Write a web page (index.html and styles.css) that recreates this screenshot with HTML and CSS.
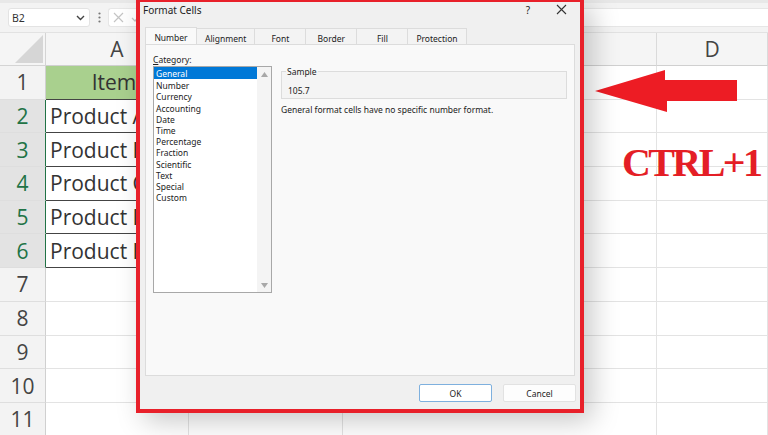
FILE: index.html
```html
<!DOCTYPE html>
<html>
<head>
<meta charset="utf-8">
<link rel="stylesheet" href="styles.css">
</head>
<body>
<div class="app">
  <div class="formula-bar">
    <div class="name-box">
      <span>B2</span>
      <svg class="chev" width="9" height="6" viewBox="0 0 9 6"><path d="M1 1 L4.5 4.5 L8 1" fill="none" stroke="#444" stroke-width="1.4"/></svg>
    </div>
    <div class="more">
      <svg width="3" height="11" viewBox="0 0 3 11"><circle cx="1.5" cy="1.5" r="1.1" fill="#777"/><circle cx="1.5" cy="5.5" r="1.1" fill="#777"/><circle cx="1.5" cy="9.5" r="1.1" fill="#777"/></svg>
    </div>
    <div class="formula-input">
      <div class="fx-btns">
        <svg width="11" height="11" viewBox="0 0 11 11"><path d="M1 1 L10 10 M10 1 L1 10" stroke="#c4c4c4" stroke-width="1.2"/></svg>
        <svg width="11" height="11" viewBox="0 0 11 11"><path d="M1 6 L4 9 L10 2" fill="none" stroke="#c4c4c4" stroke-width="1.2"/></svg>
      </div>
    </div>
  </div>

  <div class="sheet">
    <div class="corner"><svg width="28" height="28" viewBox="0 0 28 28"><path d="M28 0 L28 28 L0 28 Z" fill="#d6d6d6"/></svg></div>
    <div class="ch">A</div><div class="ch">B</div><div class="ch">C</div><div class="ch">D</div>

    <div class="rh">1</div><div class="cell title-cell">Items</div><div class="cell"></div><div class="cell"></div><div class="cell"></div>
    <div class="rh sel">2</div><div class="cell prod">Product A</div><div class="cell"></div><div class="cell"></div><div class="cell"></div>
    <div class="rh sel">3</div><div class="cell prod">Product B</div><div class="cell"></div><div class="cell"></div><div class="cell"></div>
    <div class="rh sel">4</div><div class="cell prod">Product C</div><div class="cell"></div><div class="cell"></div><div class="cell"></div>
    <div class="rh sel">5</div><div class="cell prod">Product D</div><div class="cell"></div><div class="cell"></div><div class="cell"></div>
    <div class="rh sel">6</div><div class="cell prod">Product E</div><div class="cell"></div><div class="cell"></div><div class="cell"></div>
    <div class="rh">7</div><div class="cell"></div><div class="cell"></div><div class="cell"></div><div class="cell"></div>
    <div class="rh">8</div><div class="cell"></div><div class="cell"></div><div class="cell"></div><div class="cell"></div>
    <div class="rh">9</div><div class="cell"></div><div class="cell"></div><div class="cell"></div><div class="cell"></div>
    <div class="rh">10</div><div class="cell"></div><div class="cell"></div><div class="cell"></div><div class="cell"></div>
    <div class="rh">11</div><div class="cell"></div><div class="cell"></div><div class="cell"></div><div class="cell"></div>
  </div>

  <svg class="arrow" width="150" height="50" viewBox="590 66 150 50">
    <polygon points="595,91 665,70 665,80 737,80 737,101 667,101 667,112" fill="#ed1c24"/>
  </svg>
  <div class="shortcut">CTRL+1</div>

  <div class="dialog">
    <div class="titlebar">
      <span class="title">Format Cells</span>
      <span class="help">?</span>
      <svg class="close" width="11" height="11" viewBox="0 0 11 11"><path d="M1 1 L10 10 M10 1 L1 10" stroke="#333" stroke-width="1.1"/></svg>
    </div>
    <div class="tabs">
      <div class="tab active">Number</div>
      <div class="tab">Alignment</div>
      <div class="tab">Font</div>
      <div class="tab">Border</div>
      <div class="tab">Fill</div>
      <div class="tab">Protection</div>
    </div>
    <div class="panel">
      <div class="left">
        <div class="label"><u>C</u>ategory:</div>
        <div class="listbox">
          <ul class="items">
            <li class="selected">General</li>
            <li>Number</li>
            <li>Currency</li>
            <li>Accounting</li>
            <li>Date</li>
            <li>Time</li>
            <li>Percentage</li>
            <li>Fraction</li>
            <li>Scientific</li>
            <li>Text</li>
            <li>Special</li>
            <li>Custom</li>
          </ul>
          <div class="scrollbar">
            <svg width="7" height="5" viewBox="0 0 7 5"><path d="M0 5 L3.5 0 L7 5 Z" fill="#a8a8a8"/></svg>
            <svg width="7" height="5" viewBox="0 0 7 5"><path d="M0 0 L3.5 5 L7 0 Z" fill="#a8a8a8"/></svg>
          </div>
        </div>
      </div>
      <div class="right">
        <fieldset class="sample">
          <legend>Sample</legend>
          <div class="value">105.7</div>
        </fieldset>
        <p class="desc">General format cells have no specific number format.</p>
      </div>
    </div>
    <div class="footer">
      <button class="btn ok">OK</button>
      <button class="btn">Cancel</button>
    </div>
  </div>
</div>
</body>
</html>
```

FILE: styles.css
```css
* { box-sizing: border-box; }
body {
  margin: 0;
  width: 768px;
  height: 435px;
  overflow: hidden;
  background: #fff;
  font-family: "Open Sans", "Noto Sans", sans-serif;
}
.app {
  position: relative;
  width: 768px;
  height: 435px;
  overflow: hidden;
}

/* formula bar */
.formula-bar {
  height: 33px;
  background: #f3f3f3;
  display: flex;
  align-items: flex-start;
  padding: 8px 0 0 8px;
  border-top: 3px solid #e8e8e8;
  border-bottom: 1px solid #e2e2e2;
}
.name-box {
  width: 82px;
  height: 19px;
  margin-top: -3px;
  background: #fff;
  border: 1px solid #e3e3e3;
  border-radius: 3px;
  display: flex;
  align-items: center;
  justify-content: space-between;
  padding: 0 4px 0 3px;
  font: 10.5px "Noto Sans", sans-serif;
  color: #333;
}
.more {
  width: 18px;
  height: 19px;
  margin-top: -3px;
  display: flex;
  align-items: center;
  justify-content: center;
}
.formula-input {
  flex: 1;
  height: 19px;
  margin-top: -3px;
  background: #fff;
  border: 1px solid #e6e6e6;
  border-right: none;
  border-radius: 3px 0 0 3px;
  display: flex;
}
.fx-btns {
  display: flex;
  align-items: center;
  gap: 7px;
  padding-left: 4px;
}

/* sheet */
.sheet {
  display: grid;
  grid-template-columns: 46px 143px 154px 314px 1fr;
  grid-template-rows: 33px repeat(11, 33.7px);
  font-size: 21px;
  color: #444;
}
.corner {
  background: #f5f5f5;
  border-right: 1px solid #d4d4d4;
  border-bottom: 1px solid #d4d4d4;
  display: flex;
  align-items: flex-end;
  justify-content: flex-end;
  padding: 0 2px 2px 0;
}
.ch {
  background: #f5f5f5;
  border-right: 1px solid #dadada;
  border-bottom: 1px solid #d0d0d0;
  display: flex;
  align-items: center;
  justify-content: center;
}
.rh {
  background: #f3f3f3;
  border-right: 1px solid #d0d0d0;
  border-bottom: 1px solid #dedede;
  display: flex;
  align-items: center;
  justify-content: center;
}
.rh.sel {
  background: #e3e3e3;
  color: #217346;
  border-right: 1px solid #217346;
}
.cell {
  border-right: 1px solid #e3e3e3;
  border-bottom: 1px solid #e3e3e3;
  display: flex;
  align-items: center;
  white-space: nowrap;
  overflow: hidden;
  color: #333;
}
.title-cell {
  background: #a9d08e;
  justify-content: center;
  padding-left: 4px;
  border-bottom: 1px solid #444;
  border-right: 1px solid #444;
}
.prod {
  padding-left: 4px;
  border-right: 1px solid #444;
  border-bottom: 1px solid #444;
}

/* annotations */
.arrow {
  position: absolute;
  left: 590px;
  top: 66px;
}
.shortcut {
  position: absolute;
  left: 622px;
  top: 143px;
  font: bold 40px/1 "Liberation Serif", serif;
  letter-spacing: -2.6px;
  color: #e41e26;
}

/* dialog */
.dialog {
  position: absolute;
  left: 136px;
  top: -2px;
  width: 448px;
  height: 415px;
  border: 4px solid #e8202a;
  background: #f0f0f0;
  box-shadow: 8px 8px 26px rgba(0,0,0,0.22);
  display: flex;
  flex-direction: column;
  font: 8.5px "Noto Sans", sans-serif;
  color: #222;
}
.titlebar {
  height: 26px;
  display: flex;
  align-items: flex-start;
  padding: 1px 13px 0 3px;
}
.title {
  font-size: 10px;
  line-height: 14px;
  flex: 1;
}
.help {
  font-size: 10px;
  line-height: 14px;
  margin-right: 26px;
}
.close {
  margin-top: 1px;
}
.tabs {
  height: 17px;
  display: flex;
  padding-left: 5px;
  margin-bottom: -1px;
}
.tab {
  min-width: 52px;
  padding: 1px 8px 0;
  height: 18px;
  line-height: 17px;
  text-align: center;
  background: #f3f3f3;
  border: 1px solid #dcdcdc;
  border-bottom: none;
  margin-left: -1px;
}
.tab:first-child { margin-left: 0; }
.tab.active {
  background: #f9f9f9;
  height: 19px;
  margin-top: -1px;
}
.panel {
  height: 332px;
  margin: 0 5px;
  background: #f9f9f9;
  border: 1px solid #dcdcdc;
  display: flex;
  padding: 9px 7px 0 7px;
}
.label {
  line-height: 11px;
  margin-bottom: 1px;
}
.listbox {
  width: 119px;
  height: 227px;
  background: #fff;
  border: 1px solid #a8a8a8;
  display: flex;
}
.items {
  list-style: none;
  margin: 0;
  padding: 0;
  flex: 1;
}
.items li {
  height: 11.2px;
  line-height: 11.2px;
  padding: 1px 0 0 2px;
}
.items li.selected {
  background: #0078d7;
  color: #fff;
  padding-top: 0;
  line-height: 13px;
  height: 12.2px;
}
.scrollbar {
  width: 14px;
  background: #f4f4f4;
  display: flex;
  flex-direction: column;
  align-items: center;
  justify-content: space-between;
  padding: 5px 0 4px;
}
.right {
  flex: 1;
  margin-left: 9px;
  padding-top: 12px;
}
.sample {
  margin: 0;
  padding: 0 4px 2px 4px;
  border: 1px solid #dcdcdc;
  background: #f4f4f4;
  height: 33px;
}
.sample legend {
  padding: 0 1px;
  line-height: 11px;
}
.value {
  line-height: 11px;
  padding: 8px 0 0 2px;
}
.desc {
  margin: 5px 0 0;
  line-height: 11px;
}
.footer {
  height: 32px;
  display: flex;
  justify-content: flex-end;
  gap: 11px;
  padding: 8px 4px 0 0;
}
.btn {
  width: 73px;
  height: 18px;
  background: #fdfdfd;
  border: 1px solid #e2e2e2;
  border-radius: 2px;
  font: 8.5px "Noto Sans", sans-serif;
  color: #222;
  padding: 0;
}
.btn.ok {
  background: #fff;
  border-color: #7eb0de;
}
```
